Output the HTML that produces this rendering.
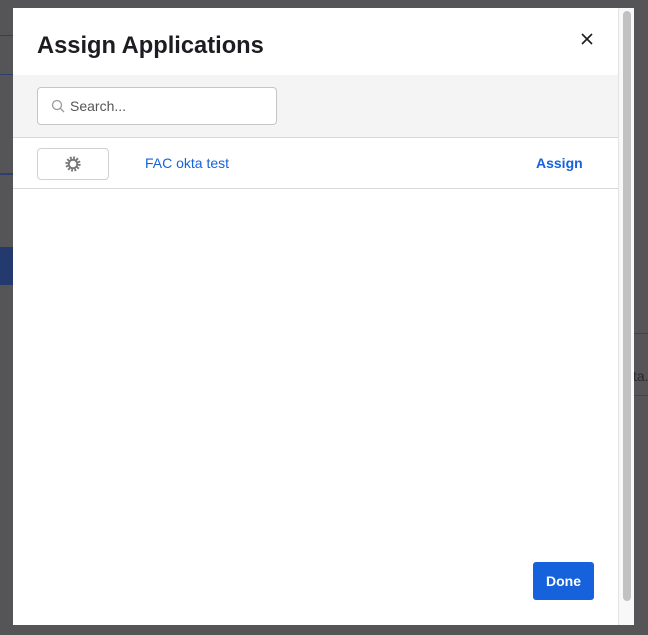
<!DOCTYPE html>
<html><head><style>
body{margin:0;width:648px;height:635px;background:#555557;position:relative;overflow:hidden;font-family:"Liberation Sans",sans-serif}
.bg{position:absolute;color:#2a2a2c;font-size:14px}
.m{position:absolute;left:13px;top:8px;width:620px;height:617px;background:#fff}
h1{position:absolute;left:24px;top:25px;margin:0;font-size:23.7px;font-weight:bold;color:#1d1d21}
.bar{position:absolute;left:0;top:67px;width:605px;height:62px;background:#f4f4f4;border-bottom:1px solid #d8d8d8}
.s{position:absolute;left:24px;top:79px;width:238px;height:36px;border:1px solid #c5c5c8;border-radius:4px;background:#fff}
.s span{position:absolute;left:32px;top:10px;font-size:14px;color:#555}
.row{position:absolute;left:0;top:130px;width:605px;height:50px;border-bottom:1px solid #d8d8d8}
.g{position:absolute;left:24px;top:10px;width:70px;height:30px;border:1px solid #d0d0d2;border-radius:4px}
.ln{position:absolute;top:17px;font-size:14px;color:#1662dd}
.sb{position:absolute;left:605px;top:0;width:15px;height:617px;background:#f8f8f8;border-left:1px solid #e3e3e3}
.th{position:absolute;left:4px;top:3px;width:8px;height:590px;background:#c1c1c1;border-radius:4px}
.d{position:absolute;left:520px;top:554px;width:61px;height:38px;background:#1662dd;border-radius:3px;color:#fff;font-weight:bold;font-size:14px;text-align:center;line-height:38px}
</style></head><body>
<div style="position:absolute;left:0;top:35px;width:13px;height:38px;border-top:1px solid #2e3e70;border-bottom:1px solid #2e3e70"></div>
<div style="position:absolute;left:0;top:173px;width:13px;height:2px;background:#2e3e70"></div>
<div style="position:absolute;left:0;top:247px;width:13px;height:38px;background:#233a6e"></div>
<div style="position:absolute;left:633px;top:333px;width:15px;height:1px;background:#444"></div>
<div style="position:absolute;left:633px;top:395px;width:15px;height:1px;background:#444"></div>
<div class="bg" style="left:633px;top:368px">ta.</div>
<div class="m">
<h1>Assign Applications</h1>
<svg style="position:absolute;left:568px;top:25px" width="12" height="12" viewBox="0 0 12 12"><path d="M1 1L11 11M11 1L1 11" stroke="#1d1d21" stroke-width="1.6"/></svg>
<div class="bar"></div>
<div class="s"><svg style="position:absolute;left:13px;top:11px" width="14" height="14" viewBox="0 0 14 14"><circle cx="6" cy="6" r="4.5" fill="none" stroke="#999" stroke-width="1.3"/><path d="M9.3 9.3L13 13" stroke="#999" stroke-width="1.3"/></svg><span>Search...</span></div>
<div class="row">
<div class="g"><svg style="position:absolute;left:27px;top:7px" width="16" height="16" viewBox="0 0 16 16"><circle cx="8" cy="8" r="6.3" fill="none" stroke="#777" stroke-width="2.6" stroke-dasharray="1.8 1.5"/><circle cx="8" cy="8" r="4.3" fill="none" stroke="#777" stroke-width="2"/></svg></div>
<div class="ln" style="left:132px">FAC okta test</div>
<div class="ln" style="left:523px;font-weight:bold">Assign</div>
</div>
<div class="sb"><div class="th"></div></div>
<div class="d">Done</div>
</div>
</body></html>
